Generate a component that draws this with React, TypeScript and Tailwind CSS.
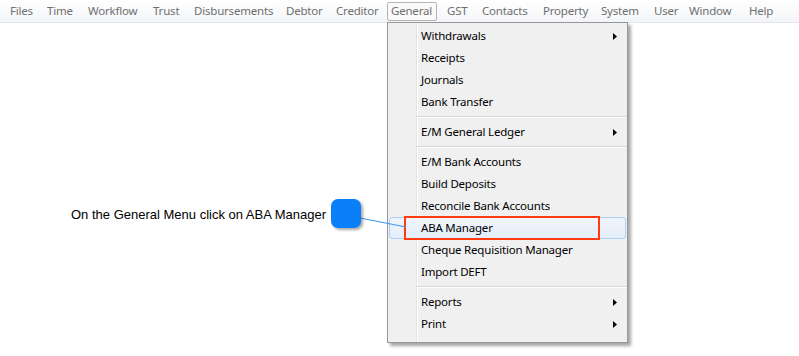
import React from 'react';

const topMenu: [string, number][] = [
  ['Files', 37],
  ['Time', 41],
  ['Workflow', 65],
  ['Trust', 41],
  ['Disbursements', 92],
  ['Debtor', 50],
  ['Creditor', 55],
  ['General', 56],
  ['GST', 35],
  ['Contacts', 61],
  ['Property', 58],
  ['System', 53],
  ['User', 35],
  ['Window', 60],
  ['Help', 40],
];

type Entry = { label: string; sub?: boolean; active?: boolean } | 'sep';

const entries: Entry[] = [
  { label: 'Withdrawals', sub: true },
  { label: 'Receipts' },
  { label: 'Journals' },
  { label: 'Bank Transfer' },
  'sep',
  { label: 'E/M General Ledger', sub: true },
  'sep',
  { label: 'E/M Bank Accounts' },
  { label: 'Build Deposits' },
  { label: 'Reconcile Bank Accounts' },
  { label: 'ABA Manager', active: true },
  { label: 'Cheque Requisition Manager' },
  { label: 'Import DEFT' },
  'sep',
  { label: 'Reports', sub: true },
  { label: 'Print', sub: true },
];

function Arrow() {
  return (
    <svg width="4" height="7" viewBox="0 0 4 7" className="relative ml-auto mr-[10px] shrink-0">
      <polygon points="0,0 4,3.5 0,7" fill="#000" />
    </svg>
  );
}

export default function App() {
  return (
    <div
      className="relative w-[799px] h-[356px] bg-white overflow-hidden"
      style={{ fontFamily: '"Noto Sans", "Open Sans", sans-serif' }}
    >
      {/* menu bar */}
      <div className="flex h-[23px] pl-[6px] items-center bg-gradient-to-b from-[#ffffff] to-[#f3f5f8] border-b border-[#e3e6ea] text-[11.5px] tracking-[-0.2px] text-[#6f6f6f]">
        {topMenu.map(([name, w]) => (
          <div key={name} className="shrink-0 flex items-center h-full" style={{ width: w }}>
            {name === 'General' ? (
              <span className="h-[19px] w-[50px] flex items-center pl-[3px] border border-[#b4b4b4] rounded-[2px] bg-[#f9f9f9]">
                {name}
              </span>
            ) : (
              <span className="pl-[4px]">{name}</span>
            )}
          </div>
        ))}
      </div>

      {/* dropdown */}
      <div className="absolute left-[387px] top-[22px] w-[241px] h-[321px] border border-[#979797] shadow-[3px_3px_3px_rgba(0,0,0,0.35)] pt-[2px] text-[11.5px] tracking-[-0.2px] text-black bg-[linear-gradient(to_right,#f0f0f0_28px,#e2e3e3_28px,#e2e3e3_29px,#ffffff_29px,#ffffff_30px,#f0f0f0_30px)]">
        {entries.map((e, i) =>
          e === 'sep' ? (
            <div key={i} className="h-[8px] pl-[29px] pr-[1px] pt-[3px]">
              <div className="border-t border-[#d7d7d7] border-b border-b-white" />
            </div>
          ) : (
            <div key={i} className="relative h-[22px] flex items-center pl-[33px]">
              {e.active && (
                <>
                  <div className="absolute left-[1px] right-[1px] top-0 bottom-0 rounded-[3px] border border-[#aecff7] bg-gradient-to-b from-[#f0f5fc] to-[#e4edf9]" />
                  <div className="absolute left-[16px] w-[196px] top-[-1px] h-[24px] border-2 border-[#ff3b0f]" />
                </>
              )}
              <span className="relative">{e.label}</span>
              {e.sub && <Arrow />}
            </div>
          )
        )}
      </div>

      {/* callout */}
      <svg className="absolute left-0 top-0" width="799" height="356">
        <line x1="360" y1="218" x2="406" y2="227" stroke="#3a95f0" strokeWidth="1" />
      </svg>
      <div className="absolute left-[71px] top-[199px] flex items-center gap-[5px]">
        <span
          className="text-[13px] text-black pt-[2px]"
          style={{ fontFamily: '"Liberation Sans", Arial, sans-serif' }}
        >
          On the General Menu click on ABA Manager
        </span>
        <div className="w-[30px] h-[29px] rounded-[7px] bg-[#0a80f8] shadow-[2px_2px_3px_rgba(0,0,0,0.35)]" />
      </div>
    </div>
  );
}
